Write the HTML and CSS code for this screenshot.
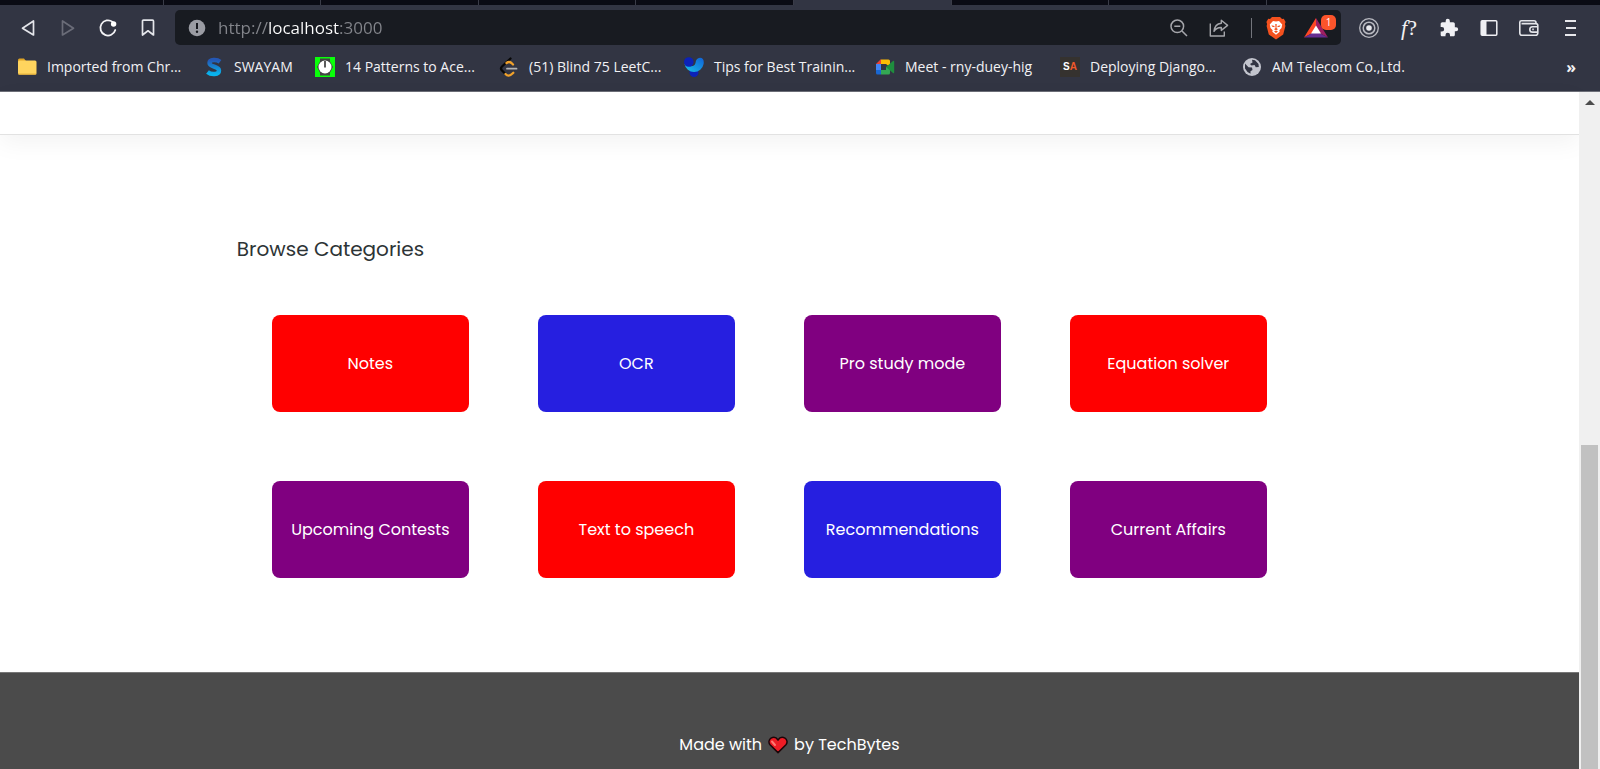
FILE: index.html
```html
<!DOCTYPE html>
<html lang="en">
<head>
  <meta charset="UTF-8">
  <meta name="viewport" content="width=device-width, initial-scale=1.0">
  <title>TechBytes</title>
  <link rel="stylesheet" href="styles.css">
</head>
<body>
  <div class="browser">
    <!-- Tab strip -->
    <div class="tabs">
      <span class="tab first"></span>
      <span class="tab"></span>
      <span class="tab"></span>
      <span class="tab"></span>
      <span class="tab"></span>
      <span class="tab active"></span>
      <span class="tab"></span>
      <span class="tab"></span>
      <span class="tab last"></span>
    </div>

    <!-- Toolbar -->
    <div class="toolbar">
      <div class="nav-buttons">
        <button class="icon-btn" aria-label="Back">
          <svg width="20" height="20" viewBox="0 0 20 20" fill="none" stroke="#e4e5ea" stroke-width="1.7" stroke-linejoin="round"><path d="M15.5 3v14L4.5 10.2z"/></svg>
        </button>
        <button class="icon-btn" aria-label="Forward" disabled>
          <svg width="20" height="20" viewBox="0 0 20 20" fill="none" stroke="#6a6c78" stroke-width="1.7" stroke-linejoin="round"><path d="M4.5 3v14l11-6.8z"/></svg>
        </button>
        <button class="icon-btn" aria-label="Reload">
          <svg width="20" height="20" viewBox="0 0 20 20" fill="none" stroke="#f2f2f5" stroke-width="1.8" stroke-linecap="round"><path d="M14.6 3.9A7.6 7.6 0 1 0 17.3 12"/><circle cx="15.6" cy="6" r="2.7" fill="#fff" stroke="none"/></svg>
        </button>
        <button class="icon-btn" aria-label="Bookmark this page">
          <svg width="20" height="20" viewBox="0 0 20 20" fill="none" stroke="#e4e5ea" stroke-width="1.7" stroke-linejoin="round"><path d="M4.5 3.2q0-1 1-1h9q1 0 1 1V17L10 12.800 4.500 17z"/></svg>
        </button>
      </div>

      <div class="address">
        <svg width="18" height="18" viewBox="0 0 18 18"><circle cx="9" cy="9" r="8.300" fill="#9a9ca3"/><path d="M9 4v6" stroke="#17191f" stroke-width="2"/><circle cx="9" cy="12.800" r="1.200" fill="#17191f"/></svg>
        <input class="url" type="text" aria-label="Address" value="http://localhost:3000">
        <div class="address-actions">
          <button class="icon-btn" aria-label="Zoom">
            <svg width="20" height="20" viewBox="0 0 20 20" fill="none" stroke="#a5a6ab" stroke-width="1.500"><circle cx="8.300" cy="8.300" r="6.300"/><path d="M5.300 8.300h6M13 13l5 5"/></svg>
          </button>
          <button class="icon-btn" aria-label="Share">
            <svg width="20" height="20" viewBox="0 0 20 20" fill="none" stroke="#a5a6ab" stroke-width="1.400" stroke-linejoin="round"><path d="M1.300 5.500V18h14v-4.500"/><path d="M12.300 2.200L18.600 7.400l-6.300 5V9.500C9 9.300 6.800 10.600 5 13.300c.4-4.600 3-7.600 7.300-8.100z"/></svg>
          </button>
          <span class="divider"></span>
          <button class="icon-btn" aria-label="Brave Shields">
            <svg width="20" height="24" viewBox="0 0 20 24"><path d="M6 1h8l2 2 1.800-.3L19.600 6l-.7 2 .5 2-2.200 8.500L10 23.500 2.800 18.500.6 10l.5-2-.7-2 1.800-3.300L4 3z" fill="#f4511e"/><path d="M10 5.500l3-.6 3.200 3.700-.7 3.400-2.200 2.300.4 1.400L10 18.800l-3.700-3.100.4-1.400L4.500 12l-.7-3.400L7 4.900z" fill="#fff"/><path d="M5.500 9.200l3 .8v1.300l-2.300-.6zM14.500 9.200l-3 .8v1.300l2.300-.6zM9.300 8h1.400l-.2 4 1.500 1.200-2 1-2-1L9.500 12zM8 15.600l2-1 2 1-2 1.400z" fill="#f4511e"/></svg>
          </button>
          <button class="icon-btn rewards" aria-label="Brave Rewards">
            <svg width="24" height="20" viewBox="0 0 24 20"><path d="M12 0L0 19.500 12 13z" fill="#ff4724"/><path d="M0 19.500h24L12 13z" fill="#662d91"/><path d="M12 0l12 19.500L12 13z" fill="#9e1f63"/><path d="M12 7.500l-5 8h10z" fill="#fff"/></svg>
            <span class="badge">1</span>
          </button>
        </div>
      </div>

      <div class="extensions">
        <button class="icon-btn" aria-label="Recorder">
          <svg width="22" height="22" viewBox="0 0 22 22" fill="none" stroke="#b9bac1"><circle cx="11" cy="11" r="9.300" stroke-width="1.300"/><circle cx="11" cy="11" r="5.800" stroke-width="1.500"/><circle cx="11" cy="11" r="2.800" fill="#e8e8ec" stroke="none"/></svg>
        </button>
        <button class="icon-btn fonts-btn" aria-label="What font"><i>f</i>?</button>
        <button class="icon-btn" aria-label="Extensions">
          <svg width="20" height="20" viewBox="0 0 24 24" fill="#f0f0f4"><path d="M20.500 11H19V7c0-1.100-.9-2-2-2h-4V3.500a2.500 2.500 0 0 0-5 0V5H4c-1.100 0-2 .9-2 2v3.800h1.500a2.700 2.700 0 0 1 0 5.400H2V20c0 1.100.9 2 2 2h3.800v-1.500a2.700 2.700 0 0 1 5.400 0V22H17c1.100 0 2-.9 2-2v-4h1.500a2.500 2.500 0 0 0 0-5z"/></svg>
        </button>
        <button class="icon-btn" aria-label="Sidebar">
          <svg width="20" height="20" viewBox="0 0 20 20"><rect x="2.200" y="2.700" width="15.600" height="14.600" rx="1" fill="none" stroke="#f0f0f4" stroke-width="1.500"/><path d="M2 3h5.500v14H2z" fill="#f0f0f4"/></svg>
        </button>
        <button class="icon-btn" aria-label="Wallet">
          <svg width="22" height="20" viewBox="0 0 22 20" fill="none" stroke="#e4e5ea" stroke-width="1.600" stroke-linejoin="round"><path d="M18 5.500V4.500Q18 2.800 16 2.800H3.500Q1.800 2.800 1.800 4.300V15Q1.800 17.300 4 17.300H17.500Q19.800 17.300 19.800 15V7.500Q19.800 5.600 17.800 5.600H3.500"/><path d="M20 8.700h-5.500a2.700 2.700 0 0 0 0 5.400H20M14.300 11.400h1.500"/></svg>
        </button>
        <button class="icon-btn" aria-label="Menu">
          <svg width="20" height="20" viewBox="0 0 20 20" stroke="#e8e8ec" stroke-width="1.800"><path d="M6 3h11M7 10h10M6 17h11"/></svg>
        </button>
      </div>
    </div>

    <!-- Bookmarks bar -->
    <nav class="bookmarks">
      <a class="bookmark" href="#">
        <svg width="20" height="20" viewBox="0 0 20 20"><path d="M1 3q0-1.500 1.500-1.500H7L9 4v4H1z" fill="#e0a526"/><rect x="1" y="3.500" width="18.500" height="14" rx="1.500" fill="#ffd45e"/><path d="M1 16.500h18.500q0 1.200-1.500 1.200H2.500Q1 17.700 1 16.500z" fill="#e8b33c"/></svg>
        Imported from Chr...
      </a>
      <a class="bookmark" href="#">
        <svg width="20" height="20" viewBox="0 0 20 20" fill="none" stroke-width="4.400"><defs><linearGradient id="swayam" x1="0" y1="0" x2="0" y2="1"><stop offset="0" stop-color="#2457b5"/><stop offset="1" stop-color="#08b4ed"/></linearGradient></defs><path d="M16 4.700C13 2.300 5.500 2.200 5.500 6c0 4.200 9.500 3.200 9.500 7.500 0 4.500-8 4.300-11.500 1.500" stroke="url(#swayam)"/></svg>
        SWAYAM
      </a>
      <a class="bookmark" href="#">
        <svg width="20" height="20" viewBox="0 0 20 20"><path d="M0 0h20v20H0z" fill="#0aff0a"/><path d="M5 1.500h10v3l3 5.500-3 5.500v3H5v-3L2 10l3-5.500z" fill="#444"/><circle cx="10" cy="10" r="6.500" fill="#fff"/><path d="M10 4v6.500" stroke="#333" stroke-width="1.600"/></svg>
        14 Patterns to Ace...
      </a>
      <a class="bookmark" href="#">
        <svg width="20" height="20" viewBox="0 0 20 20" fill="none" stroke-width="2.300" stroke-linecap="round"><path d="M11.500 1.500L3 9.500Q1 11.500 3 13.500l3 3" stroke="#080808"/><path d="M7.500 6Q10 4 12.500 6l1.500 1.500M6.500 17q3 3.500 7-.5l.8-.8" stroke="#f0a12b"/><path d="M8 11.700h9.500" stroke="#b3b3b3" stroke-width="1.800"/></svg>
        (51) Blind 75 LeetC...
      </a>
      <a class="bookmark" href="#">
        <svg width="20" height="20" viewBox="0 0 20 20"><defs><linearGradient id="tips" x1="0" y1="1" x2="1" y2="0"><stop offset="0" stop-color="#19c4e8"/><stop offset="1" stop-color="#1060d8"/></linearGradient></defs><circle cx="10" cy="15.500" r="4.500" fill="#0c22b8"/><path d="M.5 7A9.700 9.700 0 0 0 19.600 7Q20.500 1 16 .8Q12 1 11.500 6Q10.500 10 5 9z" fill="url(#tips)"/><circle cx="4.800" cy="5" r="4.800" fill="#0c22b8"/></svg>
        Tips for Best Trainin...
      </a>
      <a class="bookmark" href="#">
        <svg width="20" height="20" viewBox="0 0 20 20"><path d="M1 7l5-5v5z" fill="#ea4335"/><path d="M1 7h5v6H1z" fill="#4285f4"/><path d="M1 13h5v4.500H2.500Q1 17.500 1 16z" fill="#1967d2"/><path d="M6 2.500h7.500Q15 2.500 15 4v6l-4-3H6z" fill="#fbbc04"/><path d="M6 13h5v-3l4-1v7q0 1.500-1.500 1.500H6z" fill="#34a853"/><path d="M11 10l7-6q1.200-.6 1.200.7v10.600q0 1.300-1.200.7z" fill="#1e8e3e"/></svg>
        Meet - rny-duey-hig
      </a>
      <a class="bookmark" href="#">
        <span class="sa-icon">S<b>A</b></span>
        Deploying Django...
      </a>
      <a class="bookmark" href="#">
        <svg width="20" height="20" viewBox="0 0 20 20"><circle cx="10" cy="10" r="9" fill="#c3c5ce"/><path d="M3 6.500l3.500 3.700 3.500.3.500 2.500-2 1.300v2.500L5.500 15 3 11.500zM10 2.800l3 .4 3.500 3.800.3 3-3 .2-1.300-2.200-3 .5L8 7l2.500-1.500z" fill="#323543"/></svg>
        AM Telecom Co.,Ltd.
      </a>
      <button class="more" aria-label="More bookmarks">»</button>
    </nav>
  </div>

  <div class="viewport">
    <div class="page">
      <header class="page-header"></header>
      <main class="categories">
        <h1>Browse Categories</h1>
        <div class="cards">
          <a class="card red" href="#">Notes</a>
          <a class="card blue" href="#">OCR</a>
          <a class="card purple" href="#">Pro study mode</a>
          <a class="card red" href="#">Equation solver</a>
          <a class="card purple" href="#">Upcoming Contests</a>
          <a class="card red" href="#">Text to speech</a>
          <a class="card blue" href="#">Recommendations</a>
          <a class="card purple" href="#">Current Affairs</a>
        </div>
      </main>
      <footer class="footer">
        <span>Made with</span>
        <svg width="20" height="18" viewBox="0 0 20 18"><path d="M10 16.600L2 8.700C.2 6.500.9 3.300 3 2.100 5.400.7 8.300 1.300 10 4c1.700-2.700 4.600-3.300 7-1.900 2.100 1.200 2.800 4.400 1 6.600z" fill="#ee1c25" stroke="#1d0508" stroke-width="1.500" stroke-linejoin="round"/><path d="M4 5.500L7 9" stroke="#ff7a72" stroke-width="2" stroke-linecap="round"/></svg>
        <span>by TechBytes</span>
      </footer>
    </div>
    <div class="scrollbar">
      <span class="scroll-arrow"></span>
      <span class="thumb"></span>
    </div>
  </div>
</body>
</html>
```
FILE: styles.css
```css
* {
  box-sizing: border-box;
}
body {
  margin: 0;
  height: 100vh;
  display: flex;
  flex-direction: column;
  overflow: hidden;
  font-family: Poppins, Inter, sans-serif;
  background: #fff;
}
a {
  text-decoration: none;
}
button {
  background: none;
  border: none;
  padding: 0;
  color: inherit;
}
svg {
  display: block;
  flex-shrink: 0;
}

/* browser */
.browser {
  background: #323543;
  color: #f1f1f4;
  font-family: "Segoe UI", "Open Sans", sans-serif;
  border-bottom: 1px solid #6d6f78;
}
.tabs {
  display: flex;
  height: 5px;
  background: #0a0b14;
}
.tab {
  flex: 158;
  border-right: 1px solid #3a3c48;
}
.tab.first {
  flex: 164;
}
.tab.active {
  background: #323543;
}
.tab.last {
  flex: 336;
  border-right: none;
}
.toolbar {
  display: flex;
  align-items: center;
  padding: 5px 11px 5px 8px;
}
.nav-buttons {
  display: flex;
  width: 167px;
}
.icon-btn {
  display: flex;
  align-items: center;
  justify-content: center;
  width: 40px;
  height: 30px;
}
.address {
  flex: 1;
  display: flex;
  align-items: center;
  height: 35px;
  padding: 0 5px 0 13px;
  border-radius: 5px;
  background: #181b21;
}
.url {
  flex: 1;
  min-width: 0;
  margin-left: 12px;
  padding: 0;
  border: none;
  outline: none;
  font: 17px "Segoe UI", "Open Sans", sans-serif;
  /* host name is brighter than the scheme and the port */
  color: transparent;
  background: linear-gradient(90deg, #83858b 50px, #fff 50px, #fff 122px, #83858b 122px);
  background-clip: text;
  -webkit-background-clip: text;
}
.address-actions {
  display: flex;
  align-items: center;
}
.divider {
  width: 1px;
  height: 20px;
  margin: 0 4px 0 12px;
  background: #73757c;
}
.rewards {
  position: relative;
}
.badge {
  position: absolute;
  top: 2px;
  right: 0;
  width: 15px;
  height: 15px;
  border-radius: 5px;
  background: #fb542b;
  color: #fff;
  font: 10px/15px "Open Sans", sans-serif;
  text-align: center;
}
.extensions {
  display: flex;
  margin-left: 8px;
}
.fonts-btn {
  font: 22px "Liberation Serif", serif;
}
.bookmarks {
  display: grid;
  grid-template-columns: 187px 111px 184px 185px 191px 185px 182px 1fr auto;
  align-items: center;
  height: 41px;
  padding: 0 24px 8px 17px;
}
.bookmark {
  display: flex;
  align-items: center;
  gap: 10px;
  color: #f1f1f4;
  font-size: 14px;
  white-space: nowrap;
}
.sa-icon {
  width: 20px;
  background: #35322f;
  color: #fff;
  font: bold 10px/20px "Liberation Sans", sans-serif;
  text-align: center;
}
.sa-icon b {
  color: #f0592a;
}
.more {
  font: bold 16px "Open Sans", sans-serif;
}

/* page */
.viewport {
  flex: 1;
  display: flex;
  min-height: 0;
}
.page {
  flex: 1;
  display: flex;
  flex-direction: column;
}
.page-header {
  height: 43px;
  border-bottom: 1px solid #e2e2e2;
  box-shadow: 0 8px 24px rgba(0, 0, 0, 0.05);
}
.categories {
  padding: 99px 15% 94px;
}
.categories h1 {
  margin: 0 0 51px;
  font-size: 20px;
  font-weight: 400;
  line-height: 30px;
  color: #2d3436;
}
.cards {
  display: grid;
  grid-template-columns: repeat(4, 197px);
  gap: 69px;
  margin-left: 35px;
}
.card {
  display: flex;
  align-items: center;
  justify-content: center;
  height: 97px;
  border-radius: 8px;
  color: #fff;
  font-size: 16px;
}
.red {
  background: #ff0000;
}
.blue {
  background: #261fe0;
}
.purple {
  background: #800080;
}
.footer {
  flex: 1;
  display: flex;
  align-items: flex-start;
  justify-content: center;
  gap: 6px;
  padding-top: 60px;
  border-top: 1px solid #777;
  background: #4b4b4b;
  color: #fff;
  font-size: 16px;
  line-height: 24px;
}
.footer svg {
  margin-top: 3px;
}

/* scrollbar */
.scrollbar {
  display: flex;
  flex-direction: column;
  width: 21px;
  padding: 8px 2px 0;
  background: #f0f0f0;
}
.scroll-arrow {
  align-self: center;
  border: 5px solid transparent;
  border-top: none;
  border-bottom-color: #4d4d4d;
}
.thumb {
  flex: 1;
  margin-top: 340px;
  background: #c1c1c1;
}
```
